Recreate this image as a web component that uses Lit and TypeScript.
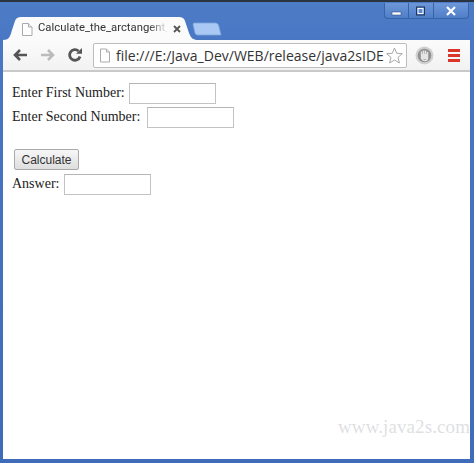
import { LitElement, html, css, svg } from "lit";
import { customElement } from "lit/decorators.js";

@customElement("app-root")
export class AppRoot extends LitElement {
  static styles = css`
    :host { display: block; width: 474px; height: 463px; overflow: hidden; }
    .window {
      position: relative; box-sizing: border-box; width: 474px; height: 463px;
      display: flex; flex-direction: column;
      background: linear-gradient(#4d7cc6, #4a77c4 40px, #3f6cb9);
      border-top: 2px solid #2b3240;
      padding: 0 4px 4px 3px;
      overflow: hidden;
    }
    .tabstrip { height: 38px; flex: none; position: relative; }
    .tabshape { position: absolute; left: 0; top: 0; }
    .tabtitle {
      position: absolute; left: 35px; top: 18px; width: 130px; white-space: nowrap;
      font: 11.3px Roboto, "Liberation Sans", sans-serif; color: #333; line-height: 16px;
      -webkit-mask-image: linear-gradient(to right, #000 85%, transparent);
      mask-image: linear-gradient(to right, #000 85%, transparent);
    }
    .controls {
      position: absolute; right: 5px; top: 1px; width: 85px; height: 16px; display: flex;
      border: 1px solid #3a63a6; border-top: none; border-radius: 0 0 4px 4px; box-sizing: border-box;
      background: linear-gradient(#6d97d8, #4f7ec9);
    }
    .ctl { display: flex; align-items: center; justify-content: center; border-right: 1px solid #3a63a6; }
    .ctl.min { width: 23px; } .ctl.max { width: 24px; } .ctl.close { flex: 1; border-right: none; }
    .toolbar {
      height: 32px; flex: none; box-sizing: border-box; display: flex; align-items: center;
      background: linear-gradient(#fbfbfb, #f2f2f2);
      border-bottom: 2px solid #c9c9c9; padding: 0 10px 0 4px;
    }
    .nav { width: 27px; display: flex; justify-content: center; flex: none; }
    .omni {
      margin-left: 5px; width: 314px; height: 25px; box-sizing: border-box; flex: none;
      display: flex; align-items: center; background: #fff;
      border: 1px solid #bdbdbd; border-radius: 2px; padding: 0 3px 0 5px;
    }
    .url {
      width: 267px; margin-left: 5px; white-space: nowrap;
      font: 14px "Open Sans", "Liberation Sans", sans-serif; color: #333;
    }
    .star { margin-left: 3px; display: flex; }
    .hand { margin-left: 8px; display: flex; flex: none; }
    .menu { margin-left: 14px; display: flex; flex-direction: column; gap: 2px; flex: none; width: 12px; }
    .menu i { display: block; height: 3px; background: #d9352b; }
    .page {
      flex: 1; position: relative; background: #fff; padding: 9px 0 0 9px;
      font: 14px "Liberation Serif", serif; color: #222;
    }
    .row { display: flex; align-items: center; height: 24px; gap: 5px; }
    .row.first { gap: 4px; }
    .row.second { gap: 7px; }
    .field {
      width: 87px; height: 21px; box-sizing: border-box; background: #fff;
      border: 1px solid #c3c3c3; border-top-color: #b5b5b5; padding: 0; margin: 0;
    }
    .btnrow { margin-top: 18px; height: 25px; display: flex; align-items: center; padding-left: 2px; }
    button {
      width: 65px; height: 21px; box-sizing: border-box; padding: 0; margin: 0;
      font: 12px "Liberation Sans", sans-serif; color: #333;
      border: 1px solid #a9a9a9; border-radius: 2px;
      background: linear-gradient(#f7f7f7, #dedede);
    }
    .mark {
      position: absolute; left: 335px; top: 344px; white-space: nowrap;
      font: 19px "Liberation Serif", serif; color: #dfdfe3; letter-spacing: 0.1px;
    }
  `;

  render() {
    return html`
      <div class="window">
        <div class="tabstrip">
          <svg class="tabshape" width="226" height="38" viewBox="0 0 226 38">
            <path d="M0 38 C6 38 7 35 9 28 L12 19 C13 16 15 15 18 15 L176 15 C179 15 181 16 182 19 L186 31 C188 36 190 38 195 38 Z" fill="#fbfbfb"/>
            <path d="M190 22 C190 21.500 191 21 192 21 L212 21 C214 21 215 22 215.500 23 L218 33 L195 33 C193 33 192.500 32 192 31 Z" fill="#a9c8f3" stroke="#7fa6dc" stroke-width="0.8"/>
            <path d="M19.500 21.500 L25.500 21.500 L29 25 L29 33.500 L19.500 33.500 Z" fill="#fff" stroke="#aaa"/>
            <path d="M25.500 21.500 V25 H29" fill="#eee" stroke="#aaa"/>
            <path d="M171 24 L177 30 M177 24 L171 30" stroke="#555" stroke-width="1.800"/>
          </svg>
          <div class="tabtitle">Calculate_the_arctangent_</div>
        </div>
        <div class="toolbar">
          <div class="nav">${this.arrow("#555", false)}</div>
          <div class="nav">${this.arrow("#bbb", true)}</div>
          <div class="nav">
            <svg width="16" height="16" viewBox="0 0 16 16">
              <path d="M13 9.500 A5.300 5.300 0 1 1 11.500 4" fill="none" stroke="#555" stroke-width="2.800"/>
              <path d="M9 6.800 L15 6.800 L15 1 Z" fill="#555"/>
            </svg>
          </div>
          <div class="omni">
            <svg width="12" height="15" viewBox="0 0 12 15" style="flex:none">
              <path d="M1.500 1 L7.500 1 L10.500 4 L10.500 14 L1.500 14 Z" fill="#fff" stroke="#aaa"/>
              <path d="M7.500 1 V4 H10.500" fill="#eee" stroke="#aaa"/>
            </svg>
            <div class="url">file:///E:/Java_Dev/WEB/release/java2sIDE</div>
            <div class="star">
              <svg width="17" height="17" viewBox="0 0 17 17">
                <path d="M8.500 1 L10.700 6.300 L16.300 6.700 L12 10.400 L13.400 16 L8.500 13 L3.600 16 L5 10.400 L0.700 6.700 L6.300 6.300 Z" fill="#fff" stroke="#a8a8a8"/>
              </svg>
            </div>
          </div>
          <div class="hand">
            <svg width="19" height="19" viewBox="0 0 19 19">
              <circle cx="9.500" cy="9.500" r="9" fill="#d0d0d0"/>
              <circle cx="9.500" cy="9.500" r="6.800" fill="#8f8f8f"/>
              <path d="M6.500 9 V5.500 M8.500 9 V4.500 M10.500 9 V4.500 M12.500 9 V6 M6.500 9 L6.500 12 Q7.500 14.500 10 14.500 Q12.500 14.500 12.500 12 V8.500" fill="none" stroke="#e4e4e4" stroke-width="1.500"/>
              <rect x="7" y="8" width="5" height="5" fill="#e4e4e4"/>
            </svg>
          </div>
          <div class="menu"><i></i><i></i><i></i></div>
        </div>
        <div class="page">
          <div class="row first">Enter First Number: <input class="field" /></div>
          <div class="row second">Enter Second Number: <input class="field" /></div>
          <div class="btnrow"><button>Calculate</button></div>
          <div class="row">Answer: <input class="field" /></div>
          <div class="mark">www.java2s.com</div>
        </div>
        <div class="controls">
          <div class="ctl min"><svg width="12" height="10" viewBox="0 0 12 10"><rect x="1" y="6" width="9" height="3" fill="#fff" stroke="#35507f" stroke-width="0.600"/></svg></div>
          <div class="ctl max"><svg width="12" height="10" viewBox="0 0 12 10"><rect x="1.500" y="1" width="8" height="8" fill="none" stroke="#23365a" stroke-width="1"/><rect x="3" y="2.500" width="5" height="5" fill="none" stroke="#fff" stroke-width="1"/></svg></div>
          <div class="ctl close"><svg width="12" height="10" viewBox="0 0 12 10"><path d="M2 1 L10 9 M10 1 L2 9" stroke="#fff" stroke-width="2.200"/></svg></div>
        </div>
      </div>
    `;
  }

  private arrow(color: string, flip: boolean) {
    return html`<svg width="15" height="14" viewBox="0 0 15 14">
      ${svg`<path d=${flip ? "M1 7 H12 M8 2 L13 7 L8 12" : "M14 7 H3 M7 2 L2 7 L7 12"} fill="none" stroke=${color} stroke-width="2.600"/>`}
    </svg>`;
  }
}
